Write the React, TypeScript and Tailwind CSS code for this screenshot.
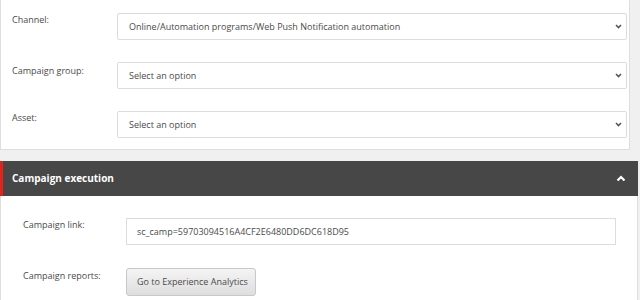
import React from "react";

function ChevronDown() {
  return (
    <svg width="7" height="5" viewBox="0 0 7 5" className="shrink-0">
      <path d="M1 1 L3.5 3.6 L6 1" fill="none" stroke="#555" strokeWidth="1.5" />
    </svg>
  );
}

function ChevronUp() {
  return (
    <svg width="10" height="7" viewBox="0 0 10 7">
      <path d="M1.5 5.5 L5 2 L8.5 5.5" fill="none" stroke="#fff" strokeWidth="2.2" />
    </svg>
  );
}

function SelectBox({ value }: { value: string }) {
  return (
    <div className="flex h-[27px] flex-1 items-center justify-between rounded-[2px] border border-[#dcdcdc] bg-white pl-[11px] pr-[4px] text-[9px] text-[#4a4a4a]">
      <span>{value}</span>
      <ChevronDown />
    </div>
  );
}

function Row({ label, value, mt, lmt }: { label: string; value: string; mt: string; lmt: string }) {
  return (
    <div className={`flex items-start ${mt}`}>
      <div className={`w-[116px] shrink-0 pl-[11px] text-[9px] leading-[12px] text-[#4a4a4a] ${lmt}`}>{label}</div>
      <SelectBox value={value} />
    </div>
  );
}

export default function App() {
  return (
    <div className="h-[300px] w-[640px] overflow-hidden bg-[#f0f0f0] font-['Open_Sans',sans-serif]">
      <div className="h-[150px] w-[630px] border-x border-b border-[#dedede] bg-white pr-[2px] pt-[13px]">
        <Row label="Channel:" value="Online/Automation programs/Web Push Notification automation" mt="mt-0" lmt="mt-[1px]" />
        <Row label="Campaign group:" value="Select an option" mt="mt-[22px]" lmt="mt-[3px]" />
        <Row label="Asset:" value="Select an option" mt="mt-[22px]" lmt="mt-[1px]" />
      </div>
      <div className="mt-[11px] flex h-[35px] w-[638px] items-center justify-between border-l-[3px] border-[#d9271d] bg-[#474747] pl-[9px] pr-[12px]">
        <span className="text-[10px] font-bold text-white">Campaign execution</span>
        <ChevronUp />
      </div>
      <div className="h-[110px] w-[638px] border-x border-[#dedede] bg-white pt-[22px]">
        <div className="flex items-start">
          <div className="mt-[1px] w-[125px] shrink-0 pl-[22px] text-[9px] leading-[12px] text-[#4a4a4a]">Campaign link:</div>
          <div className="flex h-[27px] w-[490px] items-center border border-[#dcdcdc] bg-white pl-[10px] text-[9px] text-[#4a4a4a]">
            sc_camp=59703094516A4CF2E6480DD6DC618D95
          </div>
        </div>
        <div className="mt-[23px] flex items-start">
          <div className="mt-[2px] w-[125px] shrink-0 pl-[22px] text-[9px] leading-[12px] text-[#4a4a4a]">Campaign reports:</div>
          <button className="flex h-[28px] w-[130px] items-center rounded-[3px] border border-[#c8c8c8] bg-gradient-to-b from-[#f4f4f4] to-[#dedede] pl-[10px] text-[9px] text-[#4a4a4a]">
            Go to Experience Analytics
          </button>
        </div>
      </div>
    </div>
  );
}
